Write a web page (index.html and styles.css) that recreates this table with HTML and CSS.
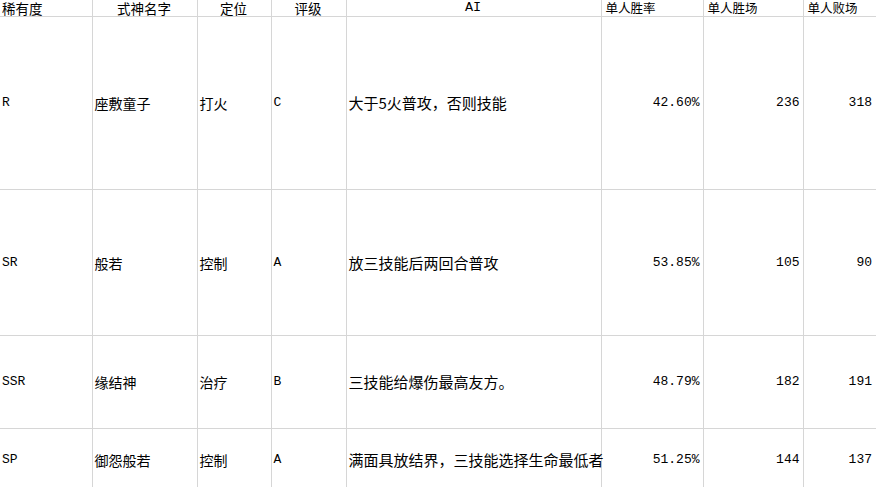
FILE: index.html
```html
<!DOCTYPE html>
<html lang="zh">
<head>
<meta charset="utf-8">
<title>式神统计</title>
<link rel="stylesheet" href="styles.css">
</head>
<body>
<table class="sheet">
  <colgroup>
    <col class="c1"><col class="c2"><col class="c3"><col class="c4"><col class="c5"><col class="c6"><col class="c7"><col class="c8">
  </colgroup>
  <thead>
    <tr class="head">
      <th class="left">稀有度</th>
      <th class="center">式神名字</th>
      <th class="center">定位</th>
      <th class="center">评级</th>
      <th class="center mono">AI</th>
      <th class="left small">单人胜率</th>
      <th class="left small">单人胜场</th>
      <th class="left small last">单人败场</th>
    </tr>
  </thead>
  <tbody>
    <tr class="r1">
      <td class="mono">R</td>
      <td>座敷童子</td>
      <td>打火</td>
      <td class="mono">C</td>
      <td class="ai">大于5火普攻，否则技能</td>
      <td class="num">42.60%</td>
      <td class="num">236</td>
      <td class="num last">318</td>
    </tr>
    <tr class="r2">
      <td class="mono">SR</td>
      <td>般若</td>
      <td>控制</td>
      <td class="mono">A</td>
      <td class="ai">放三技能后两回合普攻</td>
      <td class="num">53.85%</td>
      <td class="num">105</td>
      <td class="num last">90</td>
    </tr>
    <tr class="r3">
      <td class="mono">SSR</td>
      <td>缘结神</td>
      <td>治疗</td>
      <td class="mono">B</td>
      <td class="ai">三技能给爆伤最高友方。</td>
      <td class="num">48.79%</td>
      <td class="num">182</td>
      <td class="num last">191</td>
    </tr>
    <tr class="r4">
      <td class="mono">SP</td>
      <td>御怨般若</td>
      <td>控制</td>
      <td class="mono">A</td>
      <td class="ai">满面具放结界，三技能选择生命最低者</td>
      <td class="num">51.25%</td>
      <td class="num">144</td>
      <td class="num last">137</td>
    </tr>
  </tbody>
</table>
</body>
</html>
```

FILE: styles.css
```css
html, body {
  margin: 0;
  padding: 0;
  background: #ffffff;
  overflow: hidden;
}

.sheet {
  border-collapse: collapse;
  table-layout: fixed;
  width: 876px;
  font-family: "Noto Sans CJK SC", "Liberation Sans", sans-serif;
  font-size: 14px;
  color: #000000;
}

.c1 { width: 92px; }
.c2 { width: 105px; }
.c3 { width: 74px; }
.c4 { width: 75px; }
.c5 { width: 255px; }
.c6 { width: 102px; }
.c7 { width: 100px; }
.c8 { width: 73px; }

.sheet th,
.sheet td {
  border-right: 1px solid #d6d6d6;
  border-bottom: 1px solid #d6d6d6;
  padding: 0 3px 0 2px;
  white-space: nowrap;
  vertical-align: middle;
  font-weight: normal;
  line-height: 16px;
}

.sheet .last {
  border-right: none;
  padding-right: 4px;
}

.head th {
  height: 16px;
  padding-top: 0;
  padding-bottom: 0;
  line-height: 16px;
  font-size: 13.5px;
}

.head th.small {
  font-size: 12.5px;
  padding-left: 4px;
}

.left { text-align: left; }
.center { text-align: center; }

.mono {
  font-family: "Liberation Mono", "Noto Sans CJK SC", monospace;
  font-size: 13px;
}

.ai {
  font-size: 15px;
}

.num {
  text-align: right;
  font-family: "Liberation Mono", monospace;
  font-size: 13px;
}

.r1 td { height: 172px; }
.r2 td { height: 145px; }
.r3 td { height: 92px; }
.r4 td { height: 62px; }
```
